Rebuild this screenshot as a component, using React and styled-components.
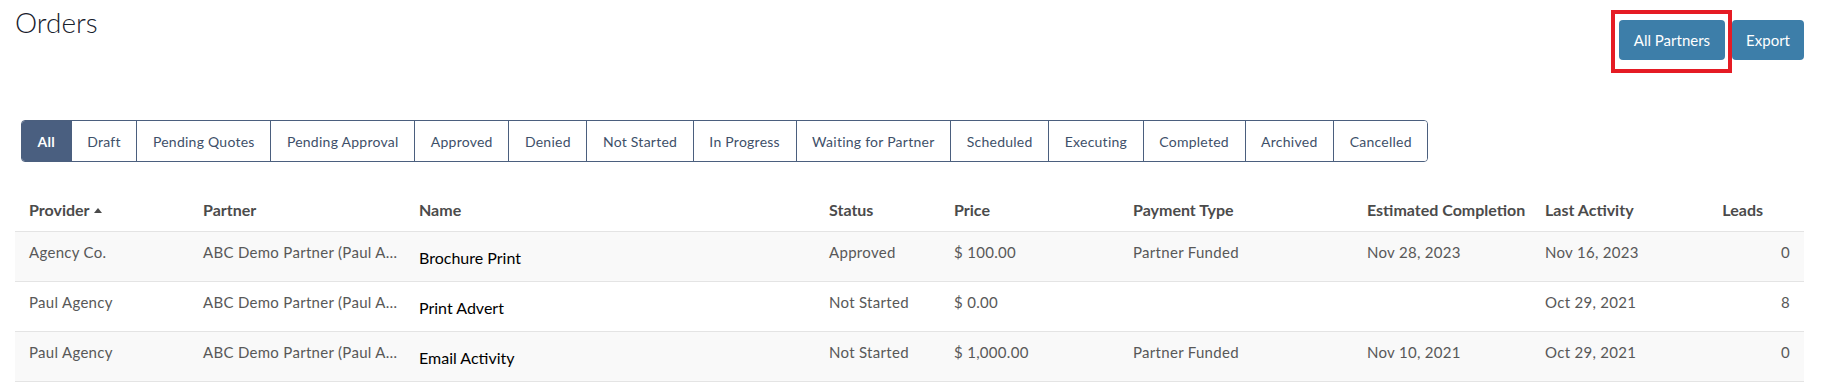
import React from "react";
import styled, { createGlobalStyle } from "styled-components";

const Global = createGlobalStyle`
  html, body { margin: 0; padding: 0; background: #fff; }
  body { font-family: Lato, "Open Sans", Arial, sans-serif; }
  * { box-sizing: border-box; }
`;

const Page = styled.div`
  padding: 6px 20px 0 15px;
`;

const TopBar = styled.div`
  display: flex;
  justify-content: space-between;
  align-items: flex-start;
`;

const Title = styled.h1`
  margin: 0;
  font-size: 28px;
  line-height: 1.2;
  font-weight: 300;
  color: #17202c;
`;

const Actions = styled.div`
  display: flex;
  gap: 7px;
  margin-top: 14px;
`;

const Button = styled.button`
  position: relative;
  height: 40px;
  padding: 0 ${(p) => p.$pad}px;
  border: none;
  border-radius: 4px;
  background: #3d7ea9;
  color: #fff;
  font-family: Lato, Arial, sans-serif;
  font-size: 15px;
  cursor: pointer;
  ${(p) =>
    p.$highlight &&
    `
    &::after {
      content: "";
      position: absolute;
      left: -8px;
      right: -7px;
      top: -10px;
      bottom: -13px;
      border: 4px solid #e51b24;
      pointer-events: none;
    }
  `}
`;

const Tabs = styled.div`
  display: inline-flex;
  margin: 60px 0 0 6px;
  border: 1px solid #4b5f7e;
  border-radius: 4px;
  overflow: hidden;
`;

const Tab = styled.button`
  height: 40px;
  padding: 0 15.6px;
  border: none;
  border-left: ${(p) => (p.$first ? "none" : "1px solid #4b5f7e")};
  background: ${(p) => (p.$active ? "#4a5f80" : "#fff")};
  color: ${(p) => (p.$active ? "#fff" : "#3e5069")};
  font-family: Lato, Arial, sans-serif;
  font-size: 14px;
  letter-spacing: 0.25px;
  font-weight: ${(p) => (p.$active ? 700 : 400)};
  cursor: pointer;
`;

const Table = styled.table`
  width: 100%;
  margin-top: 28px;
  border-collapse: collapse;
  table-layout: fixed;
  font-size: 15px;
  line-height: 20px;
`;

const Th = styled.th`
  padding: 10px ${(p) => (p.$right ? "41px" : "14px")} 11px 14px;
  text-align: ${(p) => (p.$right ? "right" : "left")};
  font-size: 16px;
  font-weight: 700;
  color: #4b4b4b;
  border-bottom: 1px solid #e4e4e4;
  white-space: nowrap;
`;

const SortArrow = styled.span`
  display: inline-block;
  margin-left: 4px;
  vertical-align: 3px;
  width: 0;
  height: 0;
  border-left: 4px solid transparent;
  border-right: 4px solid transparent;
  border-bottom: 5px solid #4b4b4b;
`;

const Row = styled.tr`
  background: ${(p) => (p.$alt ? "#f9f9f9" : "#fff")};
  border-bottom: 1px solid #e4e4e4;
`;

const Td = styled.td`
  height: 50px;
  padding: 10px 14px 0 14px;
  vertical-align: top;
  color: #585858;
  letter-spacing: 0.3px;
  text-align: ${(p) => (p.$right ? "right" : "left")};
  white-space: nowrap;
  overflow: hidden;
  text-overflow: ellipsis;
  ${(p) => p.$tight && "padding-right: 3px;"}
`;

const NameTd = styled.td`
  height: 50px;
  padding: 16px 14px 0 14px;
  vertical-align: top;
  color: #000;
  font-size: 16px;
  white-space: nowrap;
`;

const tabs = [
  "All",
  "Draft",
  "Pending Quotes",
  "Pending Approval",
  "Approved",
  "Denied",
  "Not Started",
  "In Progress",
  "Waiting for Partner",
  "Scheduled",
  "Executing",
  "Completed",
  "Archived",
  "Cancelled",
];

const columns = [174, 216, 410, 125, 179, 234, 178, 169, 104];

const rows = [
  {
    provider: "Agency Co.",
    partner: "ABC Demo Partner (Paul Agency)",
    name: "Brochure Print",
    status: "Approved",
    price: "$ 100.00",
    payment: "Partner Funded",
    est: "Nov 28, 2023",
    last: "Nov 16, 2023",
    leads: 0,
  },
  {
    provider: "Paul Agency",
    partner: "ABC Demo Partner (Paul Agency)",
    name: "Print Advert",
    status: "Not Started",
    price: "$ 0.00",
    payment: "",
    est: "",
    last: "Oct 29, 2021",
    leads: 8,
  },
  {
    provider: "Paul Agency",
    partner: "ABC Demo Partner (Paul Agency)",
    name: "Email Activity",
    status: "Not Started",
    price: "$ 1,000.00",
    payment: "Partner Funded",
    est: "Nov 10, 2021",
    last: "Oct 29, 2021",
    leads: 0,
  },
];

export default function App() {
  return (
    <Page>
      <Global />
      <TopBar>
        <Title>Orders</Title>
        <Actions>
          <Button $pad={15} $highlight>
            All Partners
          </Button>
          <Button $pad={14}>Export</Button>
        </Actions>
      </TopBar>
      <Tabs>
        {tabs.map((t, i) => (
          <Tab key={t} $first={i === 0} $active={i === 0}>
            {t}
          </Tab>
        ))}
      </Tabs>
      <Table>
        <colgroup>
          {columns.map((w, i) => (
            <col key={i} style={{ width: w }} />
          ))}
        </colgroup>
        <thead>
          <tr>
            <Th>
              Provider
              <SortArrow />
            </Th>
            <Th>Partner</Th>
            <Th>Name</Th>
            <Th>Status</Th>
            <Th>Price</Th>
            <Th>Payment Type</Th>
            <Th>Estimated Completion</Th>
            <Th>Last Activity</Th>
            <Th $right>Leads</Th>
          </tr>
        </thead>
        <tbody>
          {rows.map((r, i) => (
            <Row key={i} $alt={i % 2 === 0}>
              <Td>{r.provider}</Td>
              <Td $tight>{r.partner}</Td>
              <NameTd>{r.name}</NameTd>
              <Td>{r.status}</Td>
              <Td>{r.price}</Td>
              <Td>{r.payment}</Td>
              <Td>{r.est}</Td>
              <Td>{r.last}</Td>
              <Td $right>{r.leads}</Td>
            </Row>
          ))}
        </tbody>
      </Table>
    </Page>
  );
}
